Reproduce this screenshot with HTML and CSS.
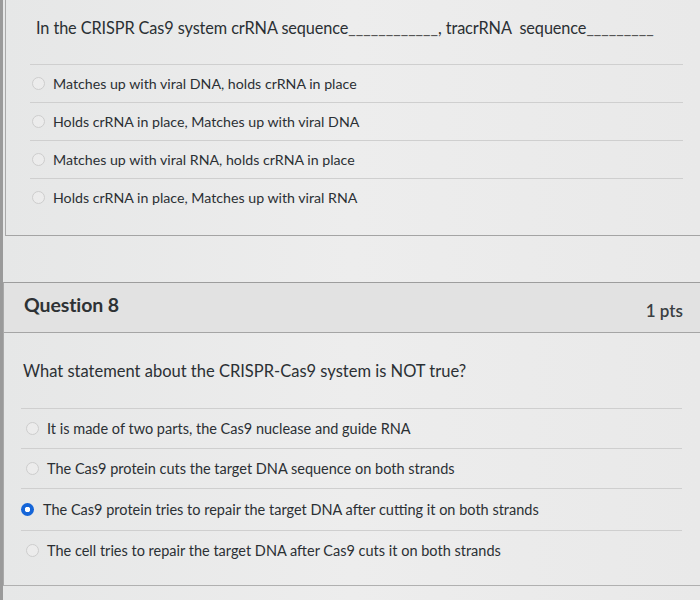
FILE: index.html
```html
<!DOCTYPE html>
<html>
<head>
<meta charset="utf-8">
<link rel="stylesheet" href="styles.css">
</head>
<body>
<div class="screen">
  <section class="panel panel-top">
    <p class="qtext q1">In the CRISPR Cas9 system crRNA sequence<span class="blank">____________</span>, tracrRNA&nbsp; sequence<span class="blank">_________</span></p>
    <ul class="answers a1">
      <li><span class="radio"></span>Matches up with viral DNA, holds crRNA in place</li>
      <li><span class="radio"></span>Holds crRNA in place, Matches up with viral DNA</li>
      <li><span class="radio"></span>Matches up with viral RNA, holds crRNA in place</li>
      <li><span class="radio"></span>Holds crRNA in place, Matches up with viral RNA</li>
    </ul>
  </section>
  <section class="panel panel-q8">
    <header class="qhead">
      <h2>Question 8</h2>
      <span class="pts">1 pts</span>
    </header>
    <p class="qtext q2">What statement about the CRISPR-Cas9 system is NOT true?</p>
    <ul class="answers a2">
      <li><span class="radio"></span>It is made of two parts, the Cas9 nuclease and guide RNA</li>
      <li><span class="radio"></span>The Cas9 protein cuts the target DNA sequence on both strands</li>
      <li class="sel"><span class="radio checked"></span>The Cas9 protein tries to repair the target DNA after cutting it on both strands</li>
      <li><span class="radio"></span>The cell tries to repair the target DNA after Cas9 cuts it on both strands</li>
    </ul>
  </section>
</div>
</body>
</html>
```
FILE: styles.css
```css
html, body {
  margin: 0;
  padding: 0;
}
body {
  width: 700px;
  height: 600px;
  overflow: hidden;
  background: #e9e9e9;
  font-family: Lato, "Open Sans", sans-serif;
  color: #2b3034;
}
.screen {
  height: 600px;
  border-left: 3px solid #9a9a9a;
  background: linear-gradient(90deg, #e6e7e7 0%, #ededed 50%, #e9e9e9 100%);
}
.panel {
  margin-left: 2px;
  border-left: 1px solid #a9a9a9;
}
.panel-top {
  height: 235px;
  border-bottom: 1px solid #a4a4a4;
}
.qtext {
  margin: 0;
}
.q1 {
  padding: 17px 0 0 30px;
  height: 47px;
  box-sizing: border-box;
  font-size: 16.3px;
  line-height: 22px;
  letter-spacing: -0.1px;
}
.blank {
  letter-spacing: 0;
  color: #555;
}
.answers {
  list-style: none;
  margin: 0;
  padding: 0;
}
.answers li {
  display: flex;
  align-items: center;
  border-top: 1px solid #cfcfcf;
  box-sizing: border-box;
}
.a1 {
  margin: 17px 17px 0 24px;
}
.a1 li {
  height: 38px;
  padding-left: 2px;
  font-size: 14.2px;
  gap: 8px;
}
.radio {
  width: 11px;
  height: 11px;
  border-radius: 50%;
  border: 1px solid #cdcdcd;
  background: #ececec;
  flex: none;
}
.radio.checked {
  width: 13px;
  height: 13px;
  border: none;
  background: radial-gradient(circle, #ffffff 0 2.5px, #1565d8 3px);
  margin-left: -5px;
  margin-right: 1px;
}
.panel-q8 {
  margin-top: 46px;
  margin-left: 0;
  border-top: 1px solid #9d9d9d;
  border-bottom: 1px solid #b0b0b0;
  height: 302px;
}
.qhead {
  display: flex;
  justify-content: space-between;
  align-items: center;
  height: 50px;
  padding: 0 17px 6px 20px;
  box-sizing: border-box;
  background: #e2e2e2;
  border-bottom: 1px solid #a5a5a5;
}
.qhead h2 {
  margin: 0;
  font-size: 19.5px;
  font-weight: 700;
  color: #2e3235;
  letter-spacing: -0.1px;
}
.pts {
  font-size: 17px;
  font-weight: 600;
  color: #3a3f43;
  padding-top: 12px;
}
.q2 {
  padding: 27px 0 0 19px;
  height: 75px;
  box-sizing: border-box;
  font-size: 16.5px;
  line-height: 22px;
}
.a2 {
  margin: 0 18px 0 17px;
}
.a2 li {
  height: 40px;
  padding-left: 5px;
  font-size: 14.5px;
  gap: 8px;
}
.a2 li.sel {
  height: 42px;
}
```
